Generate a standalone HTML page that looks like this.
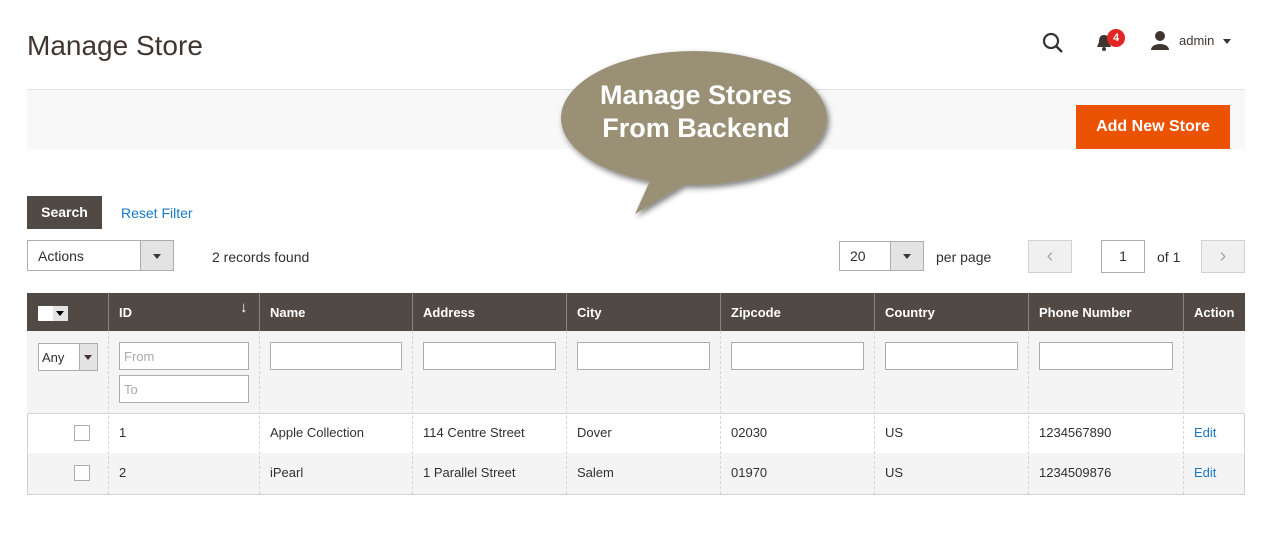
<!DOCTYPE html>
<html><head><style>
*{box-sizing:border-box;margin:0;padding:0}
body{width:1275px;height:552px;background:#fff;font-family:"Liberation Sans",sans-serif;color:#303030;position:relative;overflow:hidden;font-size:13px}
.a{position:absolute}
.inp{position:absolute;background:#fff;border:1px solid #adadad;height:28px}
.vl{position:absolute;top:331px;height:163px;border-left:1px dashed #d6d6d6}
.hv{position:absolute;top:293px;height:38px;border-left:1px solid #8a837f}
.th{position:absolute;top:305px;color:#fff;font-weight:bold;font-size:13px}
.td{position:absolute;font-size:13px;color:#303030}
</style></head><body>
<div class="a" style="left:27px;top:30px;font-size:28px;color:#41362f">Manage Store</div>
<svg class="a" style="left:1041px;top:31px" width="24" height="24" viewBox="0 0 24 24"><circle cx="10" cy="10" r="7" fill="none" stroke="#333" stroke-width="2.2"/><line x1="15" y1="15" x2="21" y2="21" stroke="#333" stroke-width="2.5"/></svg>
<svg class="a" style="left:1096px;top:34px" width="16" height="18" viewBox="0 0 16 18"><path d="M8 1C4 1 3 4 3 8L1 13H15L13 8C13 4 12 1 8 1Z" fill="#41362f"/><circle cx="8" cy="15" r="2" fill="#41362f"/></svg>
<div class="a" style="left:1107px;top:29px;width:18px;height:18px;border-radius:50%;background:#e22626;color:#fff;font-size:11px;font-weight:bold;text-align:center;line-height:18px">4</div>
<svg class="a" style="left:1150px;top:30px" width="20" height="20" viewBox="0 0 20 20"><circle cx="10" cy="6" r="5" fill="#41362f"/><path d="M1 20C1 12 19 12 19 20Z" fill="#41362f"/></svg>
<div class="a" style="left:1179px;top:33px;font-size:13px;color:#41362f">admin</div>
<div class="a" style="left:1223px;top:39px;border:4px solid transparent;border-top:5px solid #41362f"></div>
<div class="a" style="left:27px;top:89px;width:1218px;height:60px;background:#f8f8f8;border-top:1px solid #e3e3e3"></div>
<div class="a" style="left:1076px;top:105px;width:154px;height:44px;background:#eb5202;color:#fff;font-size:16px;font-weight:bold;text-align:center;line-height:44px">Add New Store</div>
<svg class="a" style="left:550px;top:45px" width="290" height="180" viewBox="550 45 290 180">
<defs><filter id="s"><feDropShadow dx="2" dy="3" stdDeviation="3" flood-opacity="0.5"/></filter></defs>
<g filter="url(#s)" fill="#999076"><ellipse cx="694" cy="118" rx="133" ry="67"/><path d="M655 170L635 214L695 178Z"/></g>
<text x="696" y="104" text-anchor="middle" fill="#fff" font-family="Liberation Sans" font-weight="bold" font-size="27">Manage Stores</text>
<text x="696" y="137" text-anchor="middle" fill="#fff" font-family="Liberation Sans" font-weight="bold" font-size="27">From Backend</text>
</svg>
<div class="a" style="left:27px;top:196px;width:75px;height:33px;background:#514943;color:#fff;font-weight:bold;font-size:14px;text-align:center;line-height:33px">Search</div>
<div class="a" style="left:121px;top:205px;color:#1979c3;font-size:14px">Reset Filter</div>
<div class="inp" style="left:27px;top:240px;width:147px;height:31px"><span class="a" style="left:10px;top:7px;font-size:14px">Actions</span><div class="a" style="left:112px;top:0;width:33px;height:29px;background:#e3e3e3;border-left:1px solid #adadad"></div><div class="a" style="left:125px;top:13px;border:4px solid transparent;border-top:5px solid #41362f"></div></div>
<div class="a" style="left:212px;top:249px;font-size:14px">2 records found</div>
<div class="inp" style="left:839px;top:241px;width:85px;height:30px"><span class="a" style="left:10px;top:6px;font-size:14px">20</span><div class="a" style="left:50px;top:0;width:33px;height:28px;background:#e3e3e3;border-left:1px solid #adadad"></div><div class="a" style="left:63px;top:12px;border:4px solid transparent;border-top:5px solid #41362f"></div></div>
<div class="a" style="left:936px;top:249px;font-size:14px">per page</div>
<div class="a" style="left:1028px;top:240px;width:44px;height:33px;background:#f0f0f0;border:1px solid #d1d1d1;color:#aaa;font-size:20px;text-align:center;line-height:30px">&lsaquo;</div>
<div class="inp" style="left:1101px;top:240px;width:44px;height:33px;text-align:center;line-height:31px;font-size:14px">1</div>
<div class="a" style="left:1157px;top:249px;font-size:14px">of 1</div>
<div class="a" style="left:1201px;top:240px;width:44px;height:33px;background:#f0f0f0;border:1px solid #d1d1d1;color:#aaa;font-size:20px;text-align:center;line-height:30px">&rsaquo;</div>
<div class="a" style="left:27px;top:293px;width:1218px;height:202px;border:1px solid #d1d1d1"></div>
<div class="a" style="left:27px;top:293px;width:1218px;height:38px;background:#514943"></div>
<div class="a" style="left:27px;top:331px;width:1218px;height:82px;background:#f4f4f4"></div>
<div class="a" style="left:27px;top:413px;width:1218px;border-top:1px solid #d6d6d6"></div>
<div class="a" style="left:28px;top:453px;width:1216px;height:41px;background:#f4f4f4"></div>
<div class="hv" style="left:108px"></div><div class="hv" style="left:259px"></div><div class="hv" style="left:412px"></div><div class="hv" style="left:566px"></div><div class="hv" style="left:720px"></div><div class="hv" style="left:874px"></div><div class="hv" style="left:1028px"></div><div class="hv" style="left:1183px"></div>
<div class="vl" style="left:108px"></div><div class="vl" style="left:259px"></div><div class="vl" style="left:412px"></div><div class="vl" style="left:566px"></div><div class="vl" style="left:720px"></div><div class="vl" style="left:874px"></div><div class="vl" style="left:1028px"></div><div class="vl" style="left:1183px"></div>
<div class="a" style="left:38px;top:306px;width:15px;height:15px;background:#fff"></div>
<div class="a" style="left:53px;top:306px;width:15px;height:15px;background:#e3e3e3"></div>
<div class="a" style="left:56px;top:311px;border:4px solid transparent;border-top:5px solid #000"></div>
<div class="th" style="left:119px">ID</div><div class="a" style="left:240px;top:299px;color:#fff;font-size:15px">&darr;</div>
<div class="th" style="left:270px">Name</div><div class="th" style="left:423px">Address</div><div class="th" style="left:577px">City</div><div class="th" style="left:731px">Zipcode</div><div class="th" style="left:885px">Country</div><div class="th" style="left:1039px">Phone Number</div><div class="th" style="left:1194px">Action</div>
<div class="inp" style="left:38px;top:343px;width:60px;height:28px"><span class="a" style="left:3px;top:6px;font-size:13px">Any</span><div class="a" style="left:40px;top:0;width:18px;height:26px;background:#e3e3e3;border-left:1px solid #adadad"></div><div class="a" style="left:45px;top:11px;border:4px solid transparent;border-top:5px solid #41362f"></div></div>
<div class="inp" style="left:119px;top:342px;width:130px;height:28px;color:#aaa;padding:6px 4px">From</div>
<div class="inp" style="left:119px;top:375px;width:130px;height:28px;color:#aaa;padding:6px 4px">To</div>
<div class="inp" style="left:270px;top:342px;width:132px"></div><div class="inp" style="left:423px;top:342px;width:133px"></div><div class="inp" style="left:577px;top:342px;width:133px"></div><div class="inp" style="left:731px;top:342px;width:133px"></div><div class="inp" style="left:885px;top:342px;width:133px"></div><div class="inp" style="left:1039px;top:342px;width:134px"></div>
<div class="a" style="left:74px;top:425px;width:16px;height:16px;border:1px solid #adadad;background:#fff"></div>
<div class="a" style="left:74px;top:465px;width:16px;height:16px;border:1px solid #adadad;background:#fff"></div>
<div class="td" style="left:119px;top:425px">1</div><div class="td" style="left:270px;top:425px">Apple Collection</div><div class="td" style="left:423px;top:425px">114 Centre Street</div><div class="td" style="left:577px;top:425px">Dover</div><div class="td" style="left:731px;top:425px">02030</div><div class="td" style="left:885px;top:425px">US</div><div class="td" style="left:1039px;top:425px">1234567890</div><div class="td" style="left:1194px;top:425px;color:#1979c3">Edit</div>
<div class="td" style="left:119px;top:465px">2</div><div class="td" style="left:270px;top:465px">iPearl</div><div class="td" style="left:423px;top:465px">1 Parallel Street</div><div class="td" style="left:577px;top:465px">Salem</div><div class="td" style="left:731px;top:465px">01970</div><div class="td" style="left:885px;top:465px">US</div><div class="td" style="left:1039px;top:465px">1234509876</div><div class="td" style="left:1194px;top:465px;color:#1979c3">Edit</div>
</body></html>
